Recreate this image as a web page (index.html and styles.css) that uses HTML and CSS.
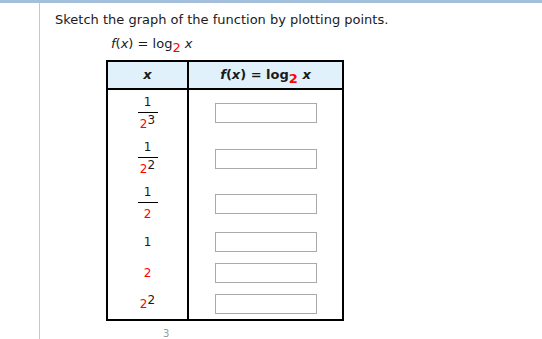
FILE: index.html
```html
<!DOCTYPE html>
<html>
<head>
<meta charset="utf-8">
<link rel="stylesheet" href="styles.css">
</head>
<body>
<div class="topbar"></div>
<div class="page">
  <div class="content">
    <p class="prompt">Sketch the graph of the function by plotting points.</p>
    <p class="func"><i>f</i>(<i>x</i>) = log<sub class="red">2</sub> <i>x</i></p>
    <table class="tbl">
      <thead>
        <tr>
          <th class="c1"><i>x</i></th>
          <th class="c2"><i>f</i>(<i>x</i>) = log<sub class="red">2</sub> <i>x</i></th>
        </tr>
      </thead>
      <tbody>
        <tr class="frow first">
          <td class="c1"><span class="frac"><span class="num">1</span><span class="den"><span class="red">2</span><sup>3</sup></span></span></td>
          <td class="c2"><span class="box"></span></td>
        </tr>
        <tr class="frow">
          <td class="c1"><span class="frac"><span class="num">1</span><span class="den"><span class="red">2</span><sup>2</sup></span></span></td>
          <td class="c2"><span class="box"></span></td>
        </tr>
        <tr class="frow">
          <td class="c1"><span class="frac"><span class="num">1</span><span class="den"><span class="red">2</span></span></span></td>
          <td class="c2"><span class="box"></span></td>
        </tr>
        <tr class="prow">
          <td class="c1">1</td>
          <td class="c2"><span class="box"></span></td>
        </tr>
        <tr class="prow">
          <td class="c1"><span class="red">2</span></td>
          <td class="c2"><span class="box"></span></td>
        </tr>
        <tr class="prow">
          <td class="c1"><span class="red">2</span><sup>2</sup></td>
          <td class="c2"><span class="box"></span></td>
        </tr>
      </tbody>
    </table>
    <div class="after">3</div>
  </div>
</div>
</body>
</html>
```
FILE: styles.css
```css
html, body {
  margin: 0;
  padding: 0;
  background: #fff;
  overflow: hidden;
}
body {
  font-family: "DejaVu Sans", Verdana, sans-serif;
  font-size: 13px;
  color: #1a1a1a;
  width: 542px;
  height: 339px;
}
.topbar {
  height: 3px;
  background: #a3bfdb;
}
.page {
  margin-left: 39px;
  border-left: 1px solid #c8c8c8;
  height: 336px;
}
.content {
  padding-left: 15px;
  padding-top: 8px;
}
.prompt {
  margin: 0;
  line-height: 18px;
}
.func {
  margin: 6px 0 0 56px;
  line-height: 18px;
}
.func sub, .tbl sub {
  font-size: 13px;
  vertical-align: -4px;
  line-height: 0;
}
.red { color: #f00; }
.tbl {
  margin: 7px 0 0 51px;
  border-collapse: collapse;
  border: 2px solid #000;
}
.tbl th {
  background: #e0f1fc;
  height: 26px;
  padding: 0;
  font-weight: bold;
  border-bottom: 2px solid #000;
  line-height: 16px;
}
.c1 {
  width: 79px;
  border-right: 2px solid #000;
  text-align: center;
  padding: 0;
}
.c2 {
  width: 153px;
  text-align: center;
  padding: 0;
}
.tbl td {
  padding: 0;
  font-size: 12px;
}
.frow td { height: 45px; }
.prow td { height: 31px; }
.frow.first td { height: 46px; }
.frac {
  display: inline-flex;
  flex-direction: column;
  align-items: center;
  vertical-align: middle;
  line-height: 13px;
}
.num {
  border-bottom: 1px solid #000;
  padding: 0 4px 3px;
  min-width: 12px;
}
.den {
  padding-top: 5px;
}
sup {
  font-size: 12px;
  vertical-align: 4px;
  line-height: 0;
}
.box {
  display: inline-block;
  width: 100px;
  height: 18px;
  border: 1px solid #aaa;
  vertical-align: middle;
  margin-left: 0;
}
.after {
  margin: 8px 0 0 108px;
  color: #999;
  font-size: 10px;
  line-height: 10px;
}
```
